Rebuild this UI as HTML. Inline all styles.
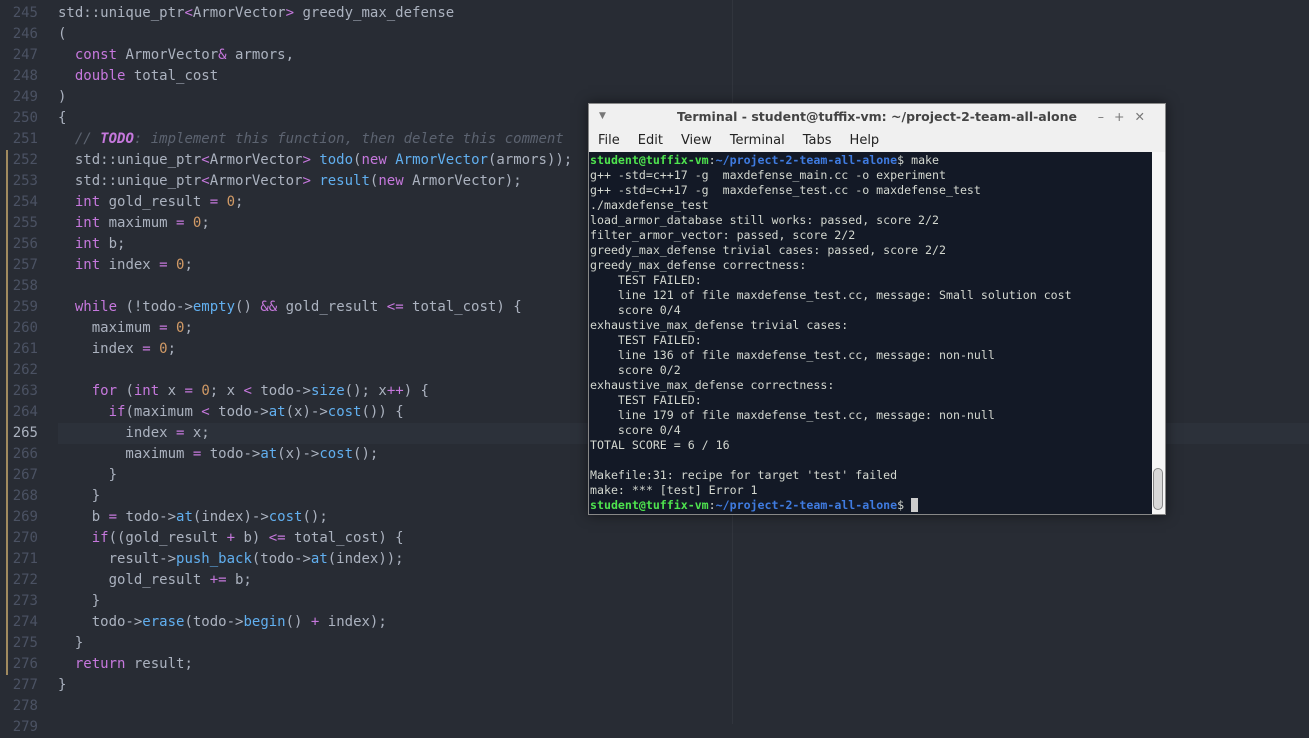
<!DOCTYPE html><html><head><style>
body{margin:0;width:1309px;height:724px;background:#282c34;overflow:hidden;position:relative;font-family:"DejaVu Sans Mono","Liberation Mono",monospace}
.ed{position:absolute;left:0;top:3px;width:1309px;font-size:14px;line-height:21px;color:#abb2bf}
.l{height:21px;position:relative}
.n{position:absolute;left:0;width:38px;text-align:right;color:#4b5263}
.c{position:absolute;left:58px;white-space:pre}
.cur{background:#2c313a}
.cur .n{color:#abb2bf}
.k{color:#c678dd}.f{color:#61afef}.d{color:#d19a66}.cm{color:#5c6370;font-style:italic}.td{color:#c678dd;font-weight:bold;font-style:italic}
.bar{position:absolute;left:6px;width:2px;background:#a08a5f}
.rule{position:absolute;left:732px;top:0;width:1px;height:724px;background:#31353d}
.term{position:absolute;left:588px;top:103px;width:578px;height:412px;background:#f0f0f0;border:1px solid #888;box-sizing:border-box;box-shadow:0 0 12px rgba(0,0,0,.5);font-family:"DejaVu Sans","Liberation Sans",sans-serif}
.tt{height:25px;line-height:25px;text-align:center;font-size:12.5px;color:#444;font-weight:bold;position:relative}
.mn{height:23px;line-height:23px;font-size:13px;color:#222}
.mn span{margin-left:9px;margin-right:9px}
.tc{position:absolute;left:0;top:48px;width:564px;height:362px;background:#131926;font-family:"DejaVu Sans Mono",monospace;font-size:11.6px;line-height:15px;color:#d3d7cf;white-space:pre;padding-left:1px;box-sizing:border-box;padding-top:1px}
.g{color:#4ee34e;font-weight:bold}.b{color:#3f7be0;font-weight:bold}
.sb{position:absolute;right:0;top:48px;width:13px;height:362px;background:#f6f6f6}
.th{position:absolute;right:2px;bottom:4px;width:8px;height:40px;border:1px solid #888;border-radius:5px;background:#d8d8d8}
</style></head><body>
<div class="rule"></div>
<div class="bar" style="top:150px;height:525px"></div>
<div class="ed"><div class="l"><span class="n">245</span><span class="c">std::unique_ptr<span class="k">&lt;</span>ArmorVector<span class="k">&gt;</span> greedy_max_defense</span></div><div class="l"><span class="n">246</span><span class="c">(</span></div><div class="l"><span class="n">247</span><span class="c">  <span class="k">const</span> ArmorVector<span class="k">&amp;</span> armors,</span></div><div class="l"><span class="n">248</span><span class="c">  <span class="k">double</span> total_cost</span></div><div class="l"><span class="n">249</span><span class="c">)</span></div><div class="l"><span class="n">250</span><span class="c">{</span></div><div class="l"><span class="n">251</span><span class="c">  <span class="cm">// <span class="td">TODO</span>: implement this function, then delete this comment</span></span></div><div class="l"><span class="n">252</span><span class="c">  std::unique_ptr<span class="k">&lt;</span>ArmorVector<span class="k">&gt;</span> <span class="f">todo</span>(<span class="k">new</span> <span class="f">ArmorVector</span>(armors));</span></div><div class="l"><span class="n">253</span><span class="c">  std::unique_ptr<span class="k">&lt;</span>ArmorVector<span class="k">&gt;</span> <span class="f">result</span>(<span class="k">new</span> ArmorVector);</span></div><div class="l"><span class="n">254</span><span class="c">  <span class="k">int</span> gold_result <span class="k">=</span> <span class="d">0</span>;</span></div><div class="l"><span class="n">255</span><span class="c">  <span class="k">int</span> maximum <span class="k">=</span> <span class="d">0</span>;</span></div><div class="l"><span class="n">256</span><span class="c">  <span class="k">int</span> b;</span></div><div class="l"><span class="n">257</span><span class="c">  <span class="k">int</span> index <span class="k">=</span> <span class="d">0</span>;</span></div><div class="l"><span class="n">258</span><span class="c"></span></div><div class="l"><span class="n">259</span><span class="c">  <span class="k">while</span> (!todo-&gt;<span class="f">empty</span>() <span class="k">&amp;&amp;</span> gold_result <span class="k">&lt;=</span> total_cost) {</span></div><div class="l"><span class="n">260</span><span class="c">    maximum <span class="k">=</span> <span class="d">0</span>;</span></div><div class="l"><span class="n">261</span><span class="c">    index <span class="k">=</span> <span class="d">0</span>;</span></div><div class="l"><span class="n">262</span><span class="c"></span></div><div class="l"><span class="n">263</span><span class="c">    <span class="k">for</span> (<span class="k">int</span> x <span class="k">=</span> <span class="d">0</span>; x <span class="k">&lt;</span> todo-&gt;<span class="f">size</span>(); x<span class="k">++</span>) {</span></div><div class="l"><span class="n">264</span><span class="c">      <span class="k">if</span>(maximum <span class="k">&lt;</span> todo-&gt;<span class="f">at</span>(x)-&gt;<span class="f">cost</span>()) {</span></div><div class="l cur" style="margin-left:58px"><span class="n" style="left:-58px">265</span><span class="c" style="left:0">        index <span class="k">=</span> x;</span></div><div class="l"><span class="n">266</span><span class="c">        maximum <span class="k">=</span> todo-&gt;<span class="f">at</span>(x)-&gt;<span class="f">cost</span>();</span></div><div class="l"><span class="n">267</span><span class="c">      }</span></div><div class="l"><span class="n">268</span><span class="c">    }</span></div><div class="l"><span class="n">269</span><span class="c">    b <span class="k">=</span> todo-&gt;<span class="f">at</span>(index)-&gt;<span class="f">cost</span>();</span></div><div class="l"><span class="n">270</span><span class="c">    <span class="k">if</span>((gold_result <span class="k">+</span> b) <span class="k">&lt;=</span> total_cost) {</span></div><div class="l"><span class="n">271</span><span class="c">      result-&gt;<span class="f">push_back</span>(todo-&gt;<span class="f">at</span>(index));</span></div><div class="l"><span class="n">272</span><span class="c">      gold_result <span class="k">+=</span> b;</span></div><div class="l"><span class="n">273</span><span class="c">    }</span></div><div class="l"><span class="n">274</span><span class="c">    todo-&gt;<span class="f">erase</span>(todo-&gt;<span class="f">begin</span>() <span class="k">+</span> index);</span></div><div class="l"><span class="n">275</span><span class="c">  }</span></div><div class="l"><span class="n">276</span><span class="c">  <span class="k">return</span> result;</span></div><div class="l"><span class="n">277</span><span class="c">}</span></div><div class="l"><span class="n">278</span><span class="c"></span></div><div class="l"><span class="n">279</span><span class="c"></span></div></div>
<div class="term">
<div class="tt"><span style="position:absolute;left:10px;font-size:9px;color:#777">▼</span>Terminal - student@tuffix-vm: ~/project-2-team-all-alone<span style="position:absolute;right:10px;font-weight:normal;color:#777;letter-spacing:10px">–+✕</span></div>
<div class="mn"><span>File</span><span>Edit</span><span>View</span><span>Terminal</span><span>Tabs</span><span>Help</span></div>
<div class="tc"><span class="g">student@tuffix-vm</span>:<span class="b">~/project-2-team-all-alone</span>$ make
g++ -std=c++17 -g  maxdefense_main.cc -o experiment
g++ -std=c++17 -g  maxdefense_test.cc -o maxdefense_test
./maxdefense_test
load_armor_database still works: passed, score 2/2
filter_armor_vector: passed, score 2/2
greedy_max_defense trivial cases: passed, score 2/2
greedy_max_defense correctness:
    TEST FAILED:
    line 121 of file maxdefense_test.cc, message: Small solution cost
    score 0/4
exhaustive_max_defense trivial cases:
    TEST FAILED:
    line 136 of file maxdefense_test.cc, message: non-null
    score 0/2
exhaustive_max_defense correctness:
    TEST FAILED:
    line 179 of file maxdefense_test.cc, message: non-null
    score 0/4
TOTAL SCORE = 6 / 16

Makefile:31: recipe for target 'test' failed
make: *** [test] Error 1
<span class="g">student@tuffix-vm</span>:<span class="b">~/project-2-team-all-alone</span>$ <span style="background:#ccc">&nbsp;</span></div>
<div class="sb"><div class="th"></div></div>
</div>
</body></html>
